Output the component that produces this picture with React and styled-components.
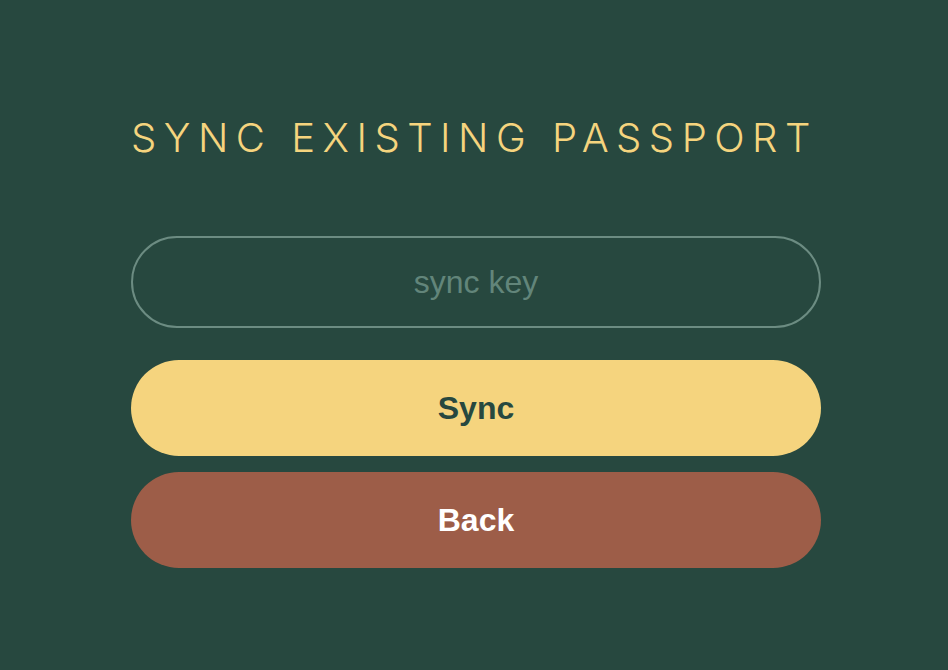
import React from "react";
import styled, { createGlobalStyle } from "styled-components";

const GlobalStyle = createGlobalStyle`
  html, body {
    margin: 0;
    padding: 0;
    background: #27483f;
  }
  * { box-sizing: border-box; }
`;

const Page = styled.main`
  min-height: 100vh;
  display: flex;
  justify-content: center;
  padding: 112px 0 0 4px;
`;

const Panel = styled.section`
  width: 690px;
  display: flex;
  flex-direction: column;
  align-items: stretch;
`;

const Title = styled.h1`
  margin: 0 0 72px;
  padding-right: 8px;
  text-align: center;
  font-family: Inter, "Noto Sans", sans-serif;
  font-weight: 300;
  font-size: 40px;
  line-height: 52px;
  letter-spacing: 7.5px;
  color: #f5d47e;
  white-space: nowrap;
`;

const KeyInput = styled.input`
  height: 92px;
  width: 100%;
  border: 2px solid #6c8c82;
  border-radius: 46px;
  background: transparent;
  text-align: center;
  font-family: "Liberation Sans", Arial, sans-serif;
  font-size: 32px;
  color: #f5d47e;
  outline: none;
  margin-bottom: 32px;

  &::placeholder {
    color: #62857a;
  }
`;

const Actions = styled.div`
  display: flex;
  flex-direction: column;
  gap: 16px;
`;

const PillButton = styled.button`
  height: 96px;
  width: 100%;
  border: none;
  border-radius: 48px;
  background: ${(p) => p.$bg};
  color: ${(p) => p.$fg};
  font-family: "Liberation Sans", Arial, sans-serif;
  font-weight: 700;
  font-size: 32px;
  cursor: pointer;
`;

export default function App() {
  return (
    <>
      <GlobalStyle />
      <Page>
        <Panel>
          <Title>SYNC EXISTING PASSPORT</Title>
          <KeyInput placeholder="sync key" />
          <Actions>
            <PillButton $bg="#f5d47e" $fg="#27483f">Sync</PillButton>
            <PillButton $bg="#9d5d48" $fg="#ffffff">Back</PillButton>
          </Actions>
        </Panel>
      </Page>
    </>
  );
}
